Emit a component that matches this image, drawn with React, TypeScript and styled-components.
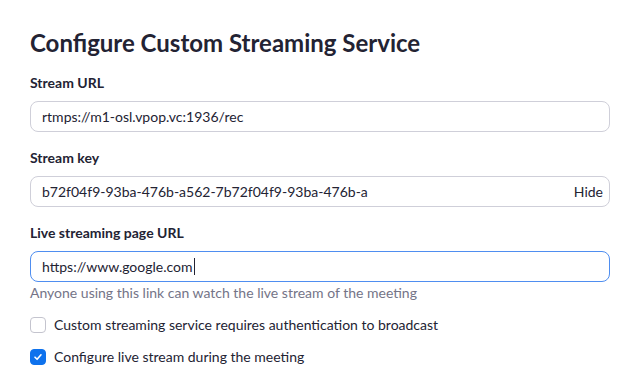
import styled, { createGlobalStyle } from "styled-components"

const GlobalStyle = createGlobalStyle`
  html, body {
    margin: 0;
    padding: 0;
    background: #ffffff;
  }
  body {
    font-family: Lato, "Open Sans", "Liberation Sans", sans-serif;
    color: #232333;
  }
`

function CheckIcon() {
  return (
    <svg width="10" height="10" viewBox="0 0 10 10" fill="none">
      <path
        d="M2 5.2 L4.1 7.3 L8 2.8"
        stroke="#ffffff"
        strokeWidth="1.6"
        strokeLinecap="round"
        strokeLinejoin="round"
      />
    </svg>
  )
}

export default function App() {
  return (
    <>
      <GlobalStyle />
      <Panel>
        <Title>Configure Custom Streaming Service</Title>

        <Field>
          <Label>Stream URL</Label>
          <InputBox>
            <InputText>rtmps://m1-osl.vpop.vc:1936/rec</InputText>
          </InputBox>
        </Field>

        <Field>
          <Label>Stream key</Label>
          <InputBox>
            <InputText>b72f04f9-93ba-476b-a562-7b72f04f9-93ba-476b-a</InputText>
            <HideButton>Hide</HideButton>
          </InputBox>
        </Field>

        <Field>
          <Label>Live streaming page URL</Label>
          <InputBox focused>
            <InputText>
              https://www.google.com
              <Caret />
            </InputText>
          </InputBox>
          <Helper>Anyone using this link can watch the live stream of the meeting</Helper>
        </Field>

        <Options>
          <CheckRow>
            <Box />
            <CheckText>Custom streaming service requires authentication to broadcast</CheckText>
          </CheckRow>
          <CheckRow>
            <Box checked>
              <CheckIcon />
            </Box>
            <CheckText>Configure live stream during the meeting</CheckText>
          </CheckRow>
        </Options>
      </Panel>
    </>
  )
}

const Panel = styled.div`
  width: 580px;
  padding: 27px 30px 0 30px;
  display: flex;
  flex-direction: column;
`

const Title = styled.h1`
  margin: 0 0 14px 0;
  font-size: 24px;
  line-height: 32px;
  font-weight: 700;
  color: #232333;
`

const Field = styled.div`
  display: flex;
  flex-direction: column;
  margin-bottom: 16px;
`

const Label = styled.div`
  font-size: 14px;
  line-height: 20px;
  font-weight: 700;
  color: #232333;
  margin-bottom: 8px;
`

const InputBox = styled.div<{ focused?: boolean }>`
  box-sizing: border-box;
  height: 31px;
  display: flex;
  align-items: center;
  justify-content: space-between;
  padding: 0 6px 0 11px;
  border: 1px solid ${(p) => (p.focused ? "#4f8ef0" : "#cfcfd9")};
  border-radius: 8px;
  background: #ffffff;
`

const InputText = styled.span`
  display: flex;
  align-items: center;
  font-size: 14px;
  color: #232333;
`

const Caret = styled.span`
  display: inline-block;
  width: 1px;
  height: 17px;
  background: #232333;
  margin-left: 1px;
`

const HideButton = styled.span`
  font-size: 14px;
  color: #232333;
`

const Helper = styled.div`
  margin-top: 1px;
  font-size: 14px;
  line-height: 19px;
  color: #747487;
`

const Options = styled.div`
  display: flex;
  flex-direction: column;
  gap: 13px;
  margin-top: -3px;
`

const CheckRow = styled.label`
  display: flex;
  align-items: center;
  gap: 8px;
  height: 19px;
`

const Box = styled.span<{ checked?: boolean }>`
  box-sizing: border-box;
  width: 16px;
  height: 16px;
  border-radius: 4px;
  display: flex;
  align-items: center;
  justify-content: center;
  border: 1px solid ${(p) => (p.checked ? "#0e72ed" : "#c4c4ce")};
  background: ${(p) => (p.checked ? "#0e72ed" : "#ffffff")};
`

const CheckText = styled.span`
  font-size: 14px;
  color: #232333;
`
